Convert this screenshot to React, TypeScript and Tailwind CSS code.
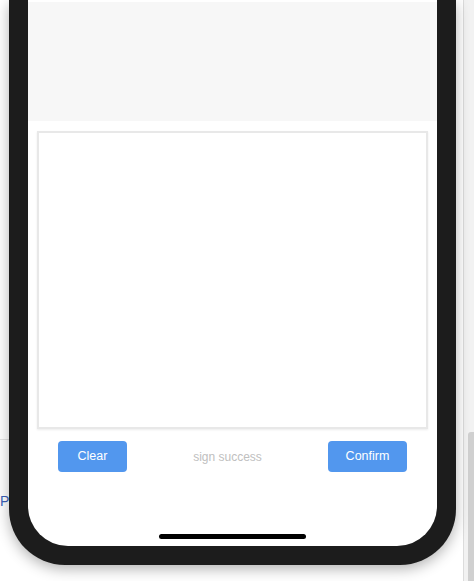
export default function App() {
  return (
    <div className="relative w-[474px] h-[581px] overflow-hidden bg-white" style={{ fontFamily: '"Liberation Sans", Arial, sans-serif' }}>
      {/* page behind the device */}
      <div className="absolute left-0 top-[439px] w-[12px] border-t border-[#e3e3e3]" />
      <span className="absolute left-[0px] top-[493px] text-[14px] leading-[17px] text-[#3b5fb8]">P</span>
      <div className="absolute right-0 top-0 h-full w-[11px] bg-[#f2f2f2] border-l border-[#dcdcdc]" />
      <div className="absolute right-0 top-[432px] h-[149px] w-[6px] rounded-tl-[3px] bg-[#d0d0d0]" />

      {/* device */}
      <div className="relative ml-[9px] w-[447px] rounded-b-[56px] bg-[#1c1c1c] px-[19px] pb-[19px] shadow-[0_4px_14px_rgba(0,0,0,0.3)]">
        <div className="flex h-[546px] flex-col overflow-hidden rounded-b-[40px] bg-white">
          <div className="mt-[2px] h-[119px] bg-[#f7f7f7]" />

          <div className="mx-[9px] mt-[10px] h-[298px] border-2 border-[#e8e8e8] bg-white shadow-[0_1px_2px_rgba(0,0,0,0.08)]" />

          <div className="mt-[12px] flex items-center px-[30px]">
            <button className="h-[31px] w-[69px] rounded-[4px] bg-[#5297ee] text-[12.5px] text-white">Clear</button>
            <span className="flex-1 text-center text-[12px] text-[#c0c0c0]">sign success</span>
            <button className="h-[31px] w-[79px] rounded-[4px] bg-[#5297ee] text-[12.5px] text-white">Confirm</button>
          </div>

          <div className="mt-auto mb-[7px] flex justify-center">
            <div className="h-[5px] w-[147px] rounded-full bg-black" />
          </div>
        </div>
      </div>
    </div>
  )
}
